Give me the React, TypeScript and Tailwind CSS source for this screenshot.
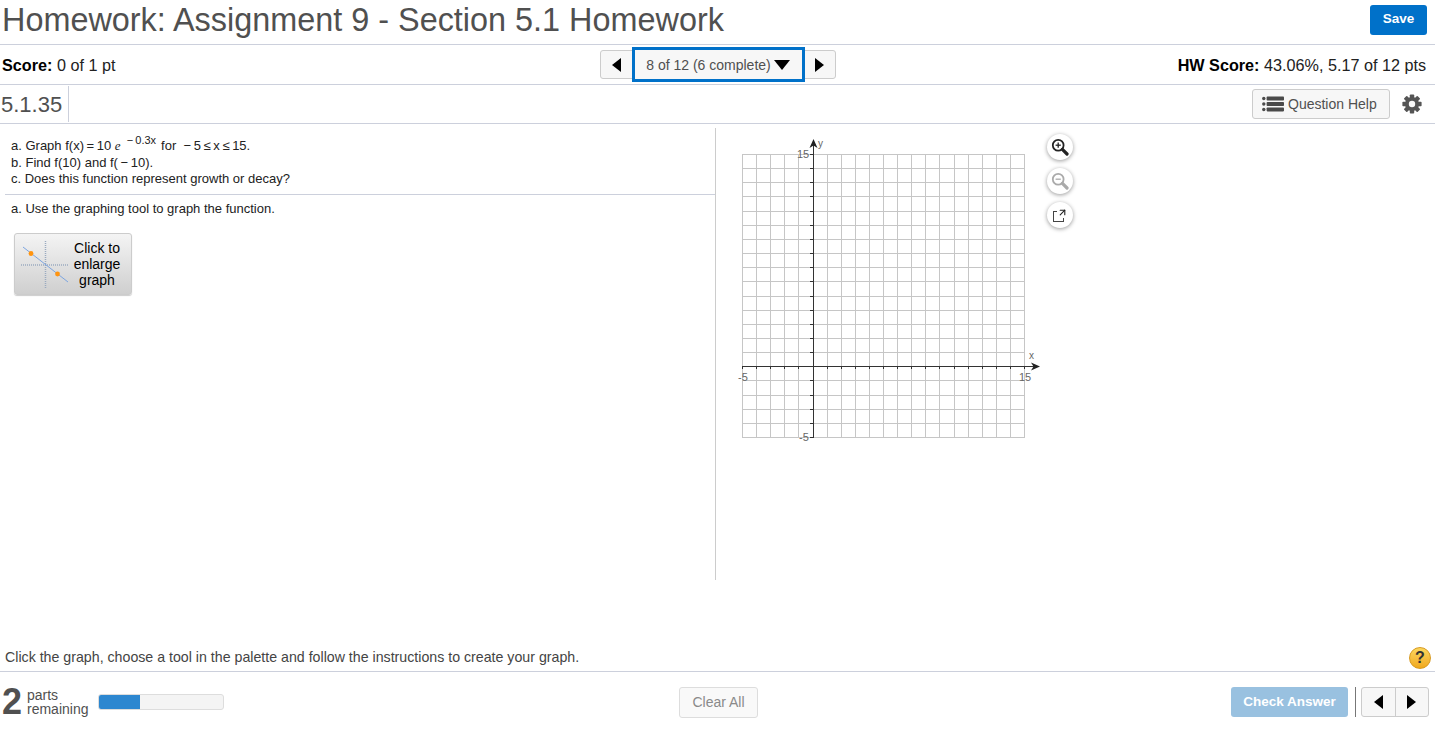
import { ArrowUpRight } from 'lucide-react';

const Tri = ({ dir, className = '' }: { dir: 'left' | 'right' | 'down'; className?: string }) => {
  const pts = dir === 'left' ? '9,0 9,14 0,7' : dir === 'right' ? '0,0 9,7 0,14' : '0,0 16,0 8,10';
  const w = dir === 'down' ? 16 : 9;
  const h = dir === 'down' ? 10 : 14;
  return (
    <svg width={w} height={h} viewBox={`0 0 ${w} ${h}`} className={className}>
      <polygon points={pts} fill="#000" />
    </svg>
  );
};

const Gear = () => (
  <svg width="20" height="20" viewBox="0 0 20 20">
    <g fill="#555">
      {[0, 45, 90, 135].map((a) => (
        <rect key={a} x="7.8" y="0.4" width="4.4" height="19.2" rx="0.8" transform={`rotate(${a} 10 10)`} />
      ))}
      <circle cx="10" cy="10" r="7" />
    </g>
    <circle cx="10" cy="10" r="3.2" fill="#f9f9f9" />
  </svg>
);

const ListIcon = () => (
  <svg width="22" height="16" viewBox="0 0 22 16">
    <g fill="#4a4a4a">
      <circle cx="1.8" cy="2.5" r="1.7" />
      <circle cx="1.8" cy="8" r="1.7" />
      <circle cx="1.8" cy="13.5" r="1.7" />
      <rect x="4.6" y="0.6" width="17.4" height="4" rx="0.8" />
      <rect x="4.6" y="6" width="17.4" height="4" rx="0.8" />
      <rect x="4.6" y="11.4" width="17.4" height="4" rx="0.8" />
    </g>
  </svg>
);

const Lens = ({ color, minus }: { color: string; minus?: boolean }) => (
  <svg width="18" height="18" viewBox="0 0 18 18">
    <circle cx="7.2" cy="7.2" r="5.4" fill="none" stroke={color} strokeWidth="1.8" />
    <line x1="11.4" y1="11.4" x2="16" y2="16" stroke={color} strokeWidth="3.2" strokeLinecap="round" />
    <line x1="4.6" y1="7.2" x2="9.8" y2="7.2" stroke={color} strokeWidth="1.3" />
    {!minus && <line x1="7.2" y1="4.6" x2="7.2" y2="9.8" stroke={color} strokeWidth="1.3" />}
  </svg>
);

const RoundBtn = ({ children }: { children: React.ReactNode }) => (
  <div className="w-[26px] h-[26px] rounded-full bg-white flex items-center justify-center shadow-[0_1px_4px_rgba(0,0,0,0.4)]">
    {children}
  </div>
);

const Thumb = () => (
  <svg width="52" height="50" viewBox="0 0 52 50" className="shrink-0 mt-[2px]">
    <line x1="0" y1="25" x2="48" y2="25" stroke="#9aaac0" strokeWidth="1.5" strokeDasharray="1 1" />
    <line x1="24.5" y1="1" x2="24.5" y2="48" stroke="#9aaac0" strokeWidth="1.5" strokeDasharray="1 1" />
    <line x1="2" y1="7" x2="47" y2="42" stroke="#7ba4e0" strokeWidth="1" />
    <circle cx="10" cy="13.5" r="2.4" fill="#ff9410" />
    <circle cx="36.5" cy="34" r="2.4" fill="#ff9410" />
  </svg>
);

const Graph = () => {
  const cell = 282 / 20;
  const cellY = 283 / 20;
  const xs = Array.from({ length: 21 }, (_, i) => Math.round(742 + i * cell) + 0.5);
  const ys = Array.from({ length: 21 }, (_, i) => Math.round(154 + i * cellY) + 0.5);
  return (
    <svg width="320" height="325" viewBox="730 130 320 325" className="shrink-0 mt-[2px]">
      {xs.map((x) => (
        <line key={x} x1={x} y1="154" x2={x} y2="438" stroke="#c6c6c6" />
      ))}
      {ys.map((y) => (
        <line key={y} x1="742" y1={y} x2="1025" y2={y} stroke="#c6c6c6" />
      ))}
      <line x1="813.5" y1="142" x2="813.5" y2="438" stroke="#333" />
      <line x1="742" y1="366.5" x2="1036" y2="366.5" stroke="#333" />
      {ys.map((y) => (
        <line key={y} x1="810" y1={y} x2="813" y2={y} stroke="#333" />
      ))}
      {xs.map((x) => (
        <line key={x} x1={x} y1="366" x2={x} y2="369" stroke="#333" />
      ))}
      <polygon points="813.5,139 817.5,148 813.5,145.5 809.5,148" fill="#222" />
      <polygon points="1040,366.5 1031,362.5 1033.5,366.5 1031,370.5" fill="#222" />
      <g fontFamily="Liberation Sans, Arial, sans-serif" fontSize="11" fill="#666">
        <text x="797" y="158">15</text>
        <text x="818" y="147" fontSize="10">y</text>
        <text x="1029" y="359" fontSize="10">x</text>
        <text x="738" y="381">-5</text>
        <text x="1019" y="381">15</text>
        <text x="799" y="441">-5</text>
      </g>
    </svg>
  );
};

export default function App() {
  return (
    <div className="w-[1435px] h-[732px] overflow-hidden bg-white flex flex-col font-['Liberation_Sans',Arial,sans-serif] text-[#222]">
      <header className="h-[45px] shrink-0 border-b border-[#ccd0dc] flex items-center justify-between pl-[2px] pr-[8px]">
        <h1 className="text-[32.4px] leading-none text-[#505050] -mt-[4px]">Homework: Assignment 9 - Section 5.1 Homework</h1>
        <button className="w-[57px] h-[30px] rounded-[3px] bg-[#0071c9] text-white text-[13.5px] font-bold -mt-[5px]">Save</button>
      </header>

      <div className="h-[40px] shrink-0 border-b border-[#ccd0dc] grid grid-cols-[1fr_auto_1fr] items-center pl-[2px] pr-[9px] text-[16.2px]">
        <div className="text-[#222] mt-[1px]"><b className="text-black">Score:</b> 0 of 1 pt</div>
        <div className="flex items-center h-[29px] border border-[#ccc] rounded-[3px] bg-[#f7f7f7] ml-[7px]">
          <div className="w-[31px] flex justify-center"><Tri dir="left" /></div>
          <div className="w-[173px] h-[35px] border-[3px] border-[#0071c9] bg-[#f7f7f7] flex items-center justify-center gap-[3px] text-sm text-[#505050]">
            8 of 12 (6 complete)
            <Tri dir="down" />
          </div>
          <div className="w-[30px] flex justify-center"><Tri dir="right" /></div>
        </div>
        <div className="text-right text-[#222] mt-[1px]"><b className="text-black">HW Score:</b> 43.06%, 5.17 of 12 pts</div>
      </div>

      <div className="h-[39px] shrink-0 border-b border-[#ccd0dc] flex items-center justify-between pl-[1px] pr-[13px]">
        <div className="h-[36px] pr-[6px] border-r border-[#ccd0dc] flex items-center text-[22px] text-[#505050]">5.1.35</div>
        <div className="flex items-center gap-[12px]">
          <button className="w-[138px] h-[30px] border border-[#ccc] rounded-[3px] bg-[#f7f7f7] flex items-center pl-[9px] gap-[4px] text-sm text-[#505050]">
            <ListIcon />
            Question Help
          </button>
          <Gear />
        </div>
      </div>

      <main className="h-[457px] shrink-0 flex pt-[4px]">
        <section className="w-[716px] h-[452px] shrink-0 border-r border-[#ccc] text-[13px] text-[#222]">
          <div className="pl-[6px] pt-[10px] pb-[6px] border-b border-[#ccd0dc] ml-[5px] leading-[16.5px]">
            <p>
              a. Graph f(x){'\u2009'}={'\u2009'}10 <i className="font-['Liberation_Serif',serif]">e</i>
              <sup className="text-[11px] ml-[6px] mr-[5px] -top-[6px] relative align-baseline">−{'\u2009'}0.3x</sup>
              for &nbsp;−{'\u2009'}5{'\u2009'}≤{'\u2009'}x{'\u2009'}≤{'\u2009'}15.
            </p>
            <p>b. Find f(10) and f({'\u2009'}−{'\u2009'}10).</p>
            <p>c. Does this function represent growth or decay?</p>
          </div>
          <p className="pl-[11px] pt-[6px] leading-[16px]">a. Use the graphing tool to graph the function.</p>
          <button className="ml-[14px] mt-[16px] w-[118px] h-[62px] rounded-[3px] border border-[#ccc] bg-gradient-to-b from-[#f4f4f4] to-[#cfcfcf] shadow-[0_1px_1px_rgba(0,0,0,0.2)] flex items-center pl-[6px] text-sm leading-[16px] text-black">
            <Thumb />
            <span className="w-[50px] text-center -ml-[1px]">Click to enlarge graph</span>
          </button>
        </section>
        <section className="flex items-start pl-[14px]">
          <Graph />
          <div className="flex flex-col gap-[8px] pt-[6px] -ml-[3px]">
            <RoundBtn><Lens color="#222" /></RoundBtn>
            <RoundBtn><Lens color="#aaa" minus /></RoundBtn>
            <RoundBtn>
              <span className="relative w-[14px] h-[14px] block">
                <span className="absolute left-0 bottom-0 w-[11px] h-[11px] border border-[#444]" />
                <ArrowUpRight size={11} strokeWidth={2.4} className="absolute right-[-1px] top-[-1px] text-[#222] bg-white" />
              </span>
            </RoundBtn>
          </div>
        </section>
      </main>

      <div className="h-[91px] shrink-0 border-b border-[#ccd0dc] flex items-end justify-between pl-[5px] pr-[4px] pb-[2px] text-[14.2px] text-[#444]">
        <span className="leading-[20px] mb-[2px]">Click the graph, choose a tool in the palette and follow the instructions to create your graph.</span>
        <span className="w-[22px] h-[22px] rounded-full bg-gradient-to-b from-[#fcd75c] to-[#f0a818] border border-[#d89a20] flex items-center justify-center text-base font-bold text-[#333]">?</span>
      </div>

      <footer className="flex-1 grid grid-cols-[1fr_auto_1fr] items-center pl-[2px] pr-[6px]">
        <div className="flex items-center">
          <span className="text-[36px] leading-none font-bold text-[#505050] w-[25px]">2</span>
          <span className="text-sm leading-[14px] text-[#505050] w-[71px]">parts<br />remaining</span>
          <div className="w-[126px] h-[16px] rounded-[3px] border border-[#ddd] bg-[#f4f4f4] overflow-hidden">
            <div className="w-[41px] h-full bg-[#2d87d0]" />
          </div>
        </div>
        <button className="w-[79px] h-[31px] border border-[#ddd] rounded-[3px] bg-[#f9f9f9] text-sm text-[#8a8a8a] ml-[6px]">Clear All</button>
        <div className="flex items-center justify-end">
          <button className="w-[117px] h-[30px] rounded-[3px] bg-[#99c1e0] text-white text-[13.5px] font-bold">Check Answer</button>
          <span className="w-px h-[30px] bg-[#777] ml-[7px] mr-[5px]" />
          <div className="flex w-[68px] h-[30px] border border-[#ccc] rounded-[3px] bg-[#f7f7f7]">
            <div className="flex-1 flex items-center justify-center border-r border-[#ccc]"><Tri dir="left" /></div>
            <div className="flex-1 flex items-center justify-center"><Tri dir="right" /></div>
          </div>
        </div>
      </footer>
    </div>
  );
}
